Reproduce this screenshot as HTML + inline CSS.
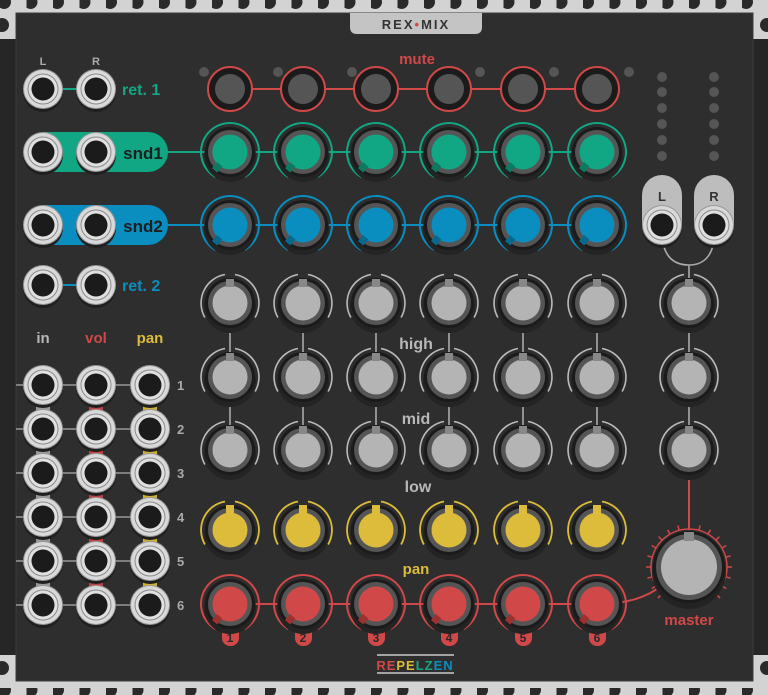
<!DOCTYPE html>
<html><head><meta charset="utf-8"><style>
html,body{margin:0;padding:0;background:#2a2a2a;width:768px;height:695px;overflow:hidden}
svg{display:block}
text{font-family:"Liberation Sans",sans-serif;font-weight:bold}
</style></head><body>
<svg width="768" height="695" viewBox="0 0 768 695" xmlns="http://www.w3.org/2000/svg">
<defs>
<g id="jack">
 <circle cy="3" r="20" fill="#1f1f1f"/>
 <circle r="20" fill="#9a9a9a"/>
 <circle r="19" fill="#d9d9d9"/>
 <circle r="15.5" fill="#8a8a8a"/>
 <circle r="14.5" fill="#e0e0e0"/>
 <circle r="11.5" fill="#1b1b1b"/>
</g>
<g id="kbase">
 <circle cy="4" r="26" fill="#242424"/>
 <circle r="25" fill="#1b1b1b"/>
 <circle r="22" fill="#555"/>
</g>
<g id="kt">
 <path d="M-14.5,25.1 A29,29 0 1 1 14.5,25.1" stroke="#12a784" stroke-width="2" fill="none"/>
 <use href="#kbase"/><circle r="17.5" fill="#12a784"/>
 <rect x="-3.5" y="-24" width="7" height="8" fill="#0c7a60" transform="rotate(-140)"/>
</g>
<g id="kb">
 <path d="M-14.5,25.1 A29,29 0 1 1 14.5,25.1" stroke="#0a8ebf" stroke-width="2" fill="none"/>
 <use href="#kbase"/><circle r="17.5" fill="#0a8ebf"/>
 <rect x="-3.5" y="-24" width="7" height="8" fill="#07698e" transform="rotate(-140)"/>
</g>
<g id="kr">
 <path d="M-14.5,25.1 A29,29 0 1 1 14.5,25.1" stroke="#d14848" stroke-width="2" fill="none"/>
 <use href="#kbase"/><circle r="17.5" fill="#d14848"/>
 <rect x="-3.5" y="-24" width="7" height="8" fill="#9e3030" transform="rotate(-140)"/>
</g>
<g id="kg">
 <path d="M-25.1,14.5 A29,29 0 0 1 -5,-28.5" stroke="#bbb" stroke-width="1.6" fill="none"/>
 <path d="M25.1,14.5 A29,29 0 0 0 5,-28.5" stroke="#bbb" stroke-width="1.6" fill="none"/>
 <use href="#kbase"/><circle r="17.5" fill="#b4b4b4"/>
 <rect x="-4" y="-24" width="8" height="8" fill="#888"/>
</g>
<g id="ky">
 <path d="M-25.1,14.5 A29,29 0 0 1 -5,-28.5" stroke="#dcbc3a" stroke-width="1.8" fill="none"/>
 <path d="M25.1,14.5 A29,29 0 0 0 5,-28.5" stroke="#dcbc3a" stroke-width="1.8" fill="none"/>
 <use href="#kbase"/><circle r="17.5" fill="#dcbc3a"/>
 <rect x="-4" y="-25" width="8" height="10" fill="#dcbc3a"/>
</g>
<g id="mute">
 <circle r="22" fill="#1b1b1b" stroke="#d14848" stroke-width="2"/>
 <circle r="15" fill="#555"/>
</g>
<pattern id="holes" x="0" y="0" width="26.5" height="20" patternUnits="userSpaceOnUse">
 <circle cx="4" cy="2" r="7" fill="#2a2a2a"/>
</pattern>
</defs>

<rect x="0" y="0" width="768" height="695" fill="#262626"/>
<rect x="0" y="13" width="16" height="26" fill="#d3d3d3"/>
<circle cx="2" cy="25" r="7" fill="#2a2a2a"/>
<rect x="753" y="13" width="15" height="26" fill="#d3d3d3"/>
<circle cx="767" cy="25" r="7" fill="#2a2a2a"/>
<rect x="0" y="655" width="16" height="26" fill="#d3d3d3"/>
<circle cx="2" cy="668" r="7" fill="#2a2a2a"/>
<rect x="753" y="655" width="15" height="26" fill="#d3d3d3"/>
<circle cx="767" cy="668" r="7" fill="#2a2a2a"/>

<rect x="0" y="0" width="768" height="13" fill="#d3d3d3"/>
<rect x="0" y="0" width="768" height="13" fill="url(#holes)"/>
<rect x="0" y="681" width="768" height="14" fill="#d3d3d3"/>
<g transform="translate(0,688)"><rect x="0" y="0" width="768" height="7" fill="url(#holes)"/></g>

<rect x="16" y="13" width="737" height="668" fill="#2e2e2e"/>
<rect x="16" y="13" width="737" height="668" fill="none" stroke="#3c3c3c" stroke-width="1"/>

<path d="M350,13 H482 V27 Q482,34 475,34 H357 Q350,34 350,27 Z" fill="#c4c4c4"/>
<text x="416" y="29" font-size="13" fill="#333" text-anchor="middle" letter-spacing="2">REX<tspan fill="#d14848">•</tspan>MIX</text>

<g stroke-width="2" fill="none">
 <line x1="230" y1="89" x2="597" y2="89" stroke="#d14848"/>
 <line x1="150" y1="152" x2="597" y2="152" stroke="#12a784"/>
 <line x1="150" y1="225" x2="597" y2="225" stroke="#0a8ebf"/>
 <line x1="230" y1="604" x2="597" y2="604" stroke="#d14848"/>
 <path d="M597,604 Q640,604 662,585" stroke="#d14848"/>
 <line x1="689" y1="450" x2="689" y2="530" stroke="#d14848"/>
 <line x1="43" y1="89" x2="96" y2="89" stroke="#12a784"/>
 <line x1="43" y1="285" x2="96" y2="285" stroke="#0a8ebf"/>
 <g stroke="#aaa" stroke-width="1.6">
  <line x1="230" y1="303" x2="230" y2="450"/><line x1="303" y1="303" x2="303" y2="450"/>
  <line x1="376" y1="303" x2="376" y2="450"/><line x1="449" y1="303" x2="449" y2="450"/>
  <line x1="523" y1="303" x2="523" y2="450"/><line x1="597" y1="303" x2="597" y2="450"/>
  <line x1="689" y1="265" x2="689" y2="450"/>
  <path d="M662,225 Q660,265 689,265 Q716,265 715,225"/>
 </g>
</g>

<rect x="26" y="132" width="142" height="40" rx="20" fill="#12a784"/>
<rect x="26" y="205" width="142" height="40" rx="20" fill="#0a8ebf"/>
<text x="143" y="159" font-size="17" fill="#1e1e1e" text-anchor="middle" font-weight="normal">snd1</text>
<text x="143" y="232" font-size="17" fill="#1e1e1e" text-anchor="middle" font-weight="normal">snd2</text>

<text x="43" y="65" font-size="11" fill="#aaa" text-anchor="middle">L</text>
<text x="96" y="65" font-size="11" fill="#aaa" text-anchor="middle">R</text>
<use href="#jack" x="43" y="89"/><use href="#jack" x="96" y="89"/>
<text x="122" y="95" font-size="16" fill="#12a784" font-weight="normal">ret. 1</text>
<use href="#jack" x="43" y="152"/><use href="#jack" x="96" y="152"/>
<use href="#jack" x="43" y="225"/><use href="#jack" x="96" y="225"/>
<use href="#jack" x="43" y="285"/><use href="#jack" x="96" y="285"/>
<text x="122" y="291" font-size="16" fill="#0a8ebf" font-weight="normal">ret. 2</text>

<text x="43" y="343" font-size="15" fill="#b8b8b8" text-anchor="middle">in</text>
<text x="96" y="343" font-size="15" fill="#d14848" text-anchor="middle">vol</text>
<text x="150" y="343" font-size="15" fill="#dcbc3a" text-anchor="middle">pan</text>
<g>
 <line x1="16" y1="385" x2="150" y2="385" stroke="#999" stroke-width="1.5"/>
 <line x1="16" y1="429" x2="150" y2="429" stroke="#999" stroke-width="1.5"/>
 <line x1="16" y1="473" x2="150" y2="473" stroke="#999" stroke-width="1.5"/>
 <line x1="16" y1="517" x2="150" y2="517" stroke="#999" stroke-width="1.5"/>
 <line x1="16" y1="561" x2="150" y2="561" stroke="#999" stroke-width="1.5"/>
 <line x1="16" y1="605" x2="150" y2="605" stroke="#999" stroke-width="1.5"/>
 <rect x="36" y="385" width="14" height="220" fill="#999"/>
 <rect x="89" y="385" width="14" height="220" fill="#c04040"/>
 <rect x="143" y="385" width="14" height="220" fill="#d0b030"/>
</g>
<g>
 <use href="#jack" x="43" y="385"/><use href="#jack" x="96" y="385"/><use href="#jack" x="150" y="385"/>
 <use href="#jack" x="43" y="429"/><use href="#jack" x="96" y="429"/><use href="#jack" x="150" y="429"/>
 <use href="#jack" x="43" y="473"/><use href="#jack" x="96" y="473"/><use href="#jack" x="150" y="473"/>
 <use href="#jack" x="43" y="517"/><use href="#jack" x="96" y="517"/><use href="#jack" x="150" y="517"/>
 <use href="#jack" x="43" y="561"/><use href="#jack" x="96" y="561"/><use href="#jack" x="150" y="561"/>
 <use href="#jack" x="43" y="605"/><use href="#jack" x="96" y="605"/><use href="#jack" x="150" y="605"/>
</g>
<g font-size="13" fill="#aaa" font-weight="normal">
 <text x="177" y="390">1</text><text x="177" y="434">2</text><text x="177" y="478">3</text>
 <text x="177" y="522">4</text><text x="177" y="566">5</text><text x="177" y="610">6</text>
</g>

<text x="417" y="64" font-size="15" fill="#d14848" text-anchor="middle">mute</text>
<g fill="#555">
 <circle cx="204" cy="72" r="5"/><circle cx="278" cy="72" r="5"/><circle cx="352" cy="72" r="5"/>
 <circle cx="480" cy="72" r="5"/><circle cx="554" cy="72" r="5"/><circle cx="629" cy="72" r="5"/>
</g>
<use href="#mute" x="230" y="89"/><use href="#mute" x="303" y="89"/><use href="#mute" x="376" y="89"/>
<use href="#mute" x="449" y="89"/><use href="#mute" x="523" y="89"/><use href="#mute" x="597" y="89"/>

<use href="#kt" x="230" y="152"/><use href="#kt" x="303" y="152"/><use href="#kt" x="376" y="152"/>
<use href="#kt" x="449" y="152"/><use href="#kt" x="523" y="152"/><use href="#kt" x="597" y="152"/>
<use href="#kb" x="230" y="225"/><use href="#kb" x="303" y="225"/><use href="#kb" x="376" y="225"/>
<use href="#kb" x="449" y="225"/><use href="#kb" x="523" y="225"/><use href="#kb" x="597" y="225"/>

<g>
 <use href="#kg" x="230" y="303"/><use href="#kg" x="303" y="303"/><use href="#kg" x="376" y="303"/>
 <use href="#kg" x="449" y="303"/><use href="#kg" x="523" y="303"/><use href="#kg" x="597" y="303"/>
 <use href="#kg" x="230" y="377"/><use href="#kg" x="303" y="377"/><use href="#kg" x="376" y="377"/>
 <use href="#kg" x="449" y="377"/><use href="#kg" x="523" y="377"/><use href="#kg" x="597" y="377"/>
 <use href="#kg" x="230" y="450"/><use href="#kg" x="303" y="450"/><use href="#kg" x="376" y="450"/>
 <use href="#kg" x="449" y="450"/><use href="#kg" x="523" y="450"/><use href="#kg" x="597" y="450"/>
 <use href="#kg" x="689" y="303"/><use href="#kg" x="689" y="377"/><use href="#kg" x="689" y="450"/>
</g>
<text x="416" y="349" font-size="16" fill="#b8b8b8" text-anchor="middle" font-weight="normal">high</text>
<text x="416" y="424" font-size="16" fill="#b8b8b8" text-anchor="middle" font-weight="normal">mid</text>
<text x="418" y="492" font-size="16" fill="#b8b8b8" text-anchor="middle" font-weight="normal">low</text>

<use href="#ky" x="230" y="530"/><use href="#ky" x="303" y="530"/><use href="#ky" x="376" y="530"/>
<use href="#ky" x="449" y="530"/><use href="#ky" x="523" y="530"/><use href="#ky" x="597" y="530"/>
<text x="416" y="574" font-size="15" fill="#dcbc3a" text-anchor="middle">pan</text>

<g fill="#d14848">
 <rect x="222" y="620" width="17" height="26" rx="8"/><rect x="295" y="620" width="17" height="26" rx="8"/>
 <rect x="368" y="620" width="17" height="26" rx="8"/><rect x="441" y="620" width="17" height="26" rx="8"/>
 <rect x="515" y="620" width="17" height="26" rx="8"/><rect x="589" y="620" width="17" height="26" rx="8"/>
</g>
<use href="#kr" x="230" y="604"/><use href="#kr" x="303" y="604"/><use href="#kr" x="376" y="604"/>
<use href="#kr" x="449" y="604"/><use href="#kr" x="523" y="604"/><use href="#kr" x="597" y="604"/>
<g font-size="12" fill="#2a2a2a" text-anchor="middle">
 <text x="230" y="642">1</text><text x="303" y="642">2</text><text x="376" y="642">3</text>
 <text x="449" y="642">4</text><text x="523" y="642">5</text><text x="597" y="642">6</text>
</g>

<g fill="#555">
 <circle cx="662" cy="77" r="5"/><circle cx="662" cy="92" r="5"/><circle cx="662" cy="108" r="5"/>
 <circle cx="662" cy="124" r="5"/><circle cx="662" cy="140" r="5"/><circle cx="662" cy="156" r="5"/>
 <circle cx="714" cy="77" r="5"/><circle cx="714" cy="92" r="5"/><circle cx="714" cy="108" r="5"/>
 <circle cx="714" cy="124" r="5"/><circle cx="714" cy="140" r="5"/><circle cx="714" cy="156" r="5"/>
</g>
<path d="M642,195 A20,20 0 0 1 682,195 V225 H642 Z" fill="#bdbdbd"/>
<path d="M694,195 A20,20 0 0 1 734,195 V225 H694 Z" fill="#bdbdbd"/>
<text x="662" y="201" font-size="13" fill="#333" text-anchor="middle">L</text>
<text x="714" y="201" font-size="13" fill="#333" text-anchor="middle">R</text>
<use href="#jack" x="662" y="225"/><use href="#jack" x="714" y="225"/>

<g transform="translate(689,567)">
 <circle r="38" fill="none" stroke="#d14848" stroke-width="1.5" stroke-dasharray="179 60" transform="rotate(135)"/>
 <g stroke="#d14848" stroke-width="1.5">
  <line x1="0" y1="-38" x2="0" y2="-44" transform="rotate(-135)"/><line x1="0" y1="-38" x2="0" y2="-43" transform="rotate(-120)"/>
  <line x1="0" y1="-38" x2="0" y2="-43" transform="rotate(-105)"/><line x1="0" y1="-38" x2="0" y2="-43" transform="rotate(-90)"/>
  <line x1="0" y1="-38" x2="0" y2="-43" transform="rotate(-75)"/><line x1="0" y1="-38" x2="0" y2="-43" transform="rotate(-60)"/>
  <line x1="0" y1="-38" x2="0" y2="-43" transform="rotate(-45)"/><line x1="0" y1="-38" x2="0" y2="-43" transform="rotate(-30)"/>
  <line x1="0" y1="-38" x2="0" y2="-43" transform="rotate(-15)"/><line x1="0" y1="-38" x2="0" y2="-44" transform="rotate(0)"/>
  <line x1="0" y1="-38" x2="0" y2="-43" transform="rotate(15)"/><line x1="0" y1="-38" x2="0" y2="-43" transform="rotate(30)"/>
  <line x1="0" y1="-38" x2="0" y2="-43" transform="rotate(45)"/><line x1="0" y1="-38" x2="0" y2="-43" transform="rotate(60)"/>
  <line x1="0" y1="-38" x2="0" y2="-43" transform="rotate(75)"/><line x1="0" y1="-38" x2="0" y2="-43" transform="rotate(90)"/>
  <line x1="0" y1="-38" x2="0" y2="-43" transform="rotate(105)"/><line x1="0" y1="-38" x2="0" y2="-43" transform="rotate(120)"/>
  <line x1="0" y1="-38" x2="0" y2="-44" transform="rotate(135)"/>
 </g>
 <circle cy="5" r="37" fill="#232323"/>
 <circle r="36" fill="#1b1b1b"/>
 <circle r="33" fill="#555"/>
 <circle r="28" fill="#b4b4b4"/>
 <rect x="-5" y="-35" width="10" height="9" fill="#888"/>
</g>
<text x="689" y="625" font-size="15" fill="#d14848" text-anchor="middle">master</text>

<line x1="377" y1="655" x2="454" y2="655" stroke="#ccc" stroke-width="1.5"/>
<line x1="377" y1="673" x2="454" y2="673" stroke="#ccc" stroke-width="1.5"/>
<text x="415" y="670" font-size="13" text-anchor="middle" letter-spacing="1"><tspan fill="#d14848">RE</tspan><tspan fill="#dcbc3a">PE</tspan><tspan fill="#12a784">LZ</tspan><tspan fill="#0a8ebf">EN</tspan></text>
</svg>
</body></html>
